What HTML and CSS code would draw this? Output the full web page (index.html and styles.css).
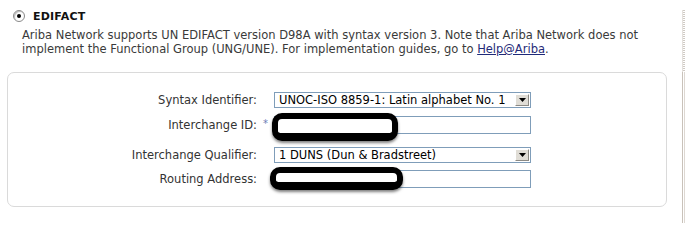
FILE: index.html
```html
<!DOCTYPE html>
<html lang="en">
<head>
    <meta charset="UTF-8">
    <title>EDIFACT Settings</title>
    <link rel="stylesheet" href="styles.css">
</head>
<body>
    <div class="page">
        <div class="option-head">
            <span class="radio"><span class="dot"></span></span>
            <span class="option-title">EDIFACT</span>
        </div>
        <div class="desc">
            Ariba Network supports UN EDIFACT version D98A with syntax version 3. Note that Ariba Network does not<br>
            implement the Functional Group (UNG/UNE). For implementation guides, go to <a href="#" class="link">Help@Ariba</a>.
        </div>
        <div class="box">
            <div class="form-row row-syntax">
                <label class="label">Syntax Identifier:</label>
                <span class="req"></span>
                <div class="select">
                    <span class="select-text">UNOC-ISO 8859-1: Latin alphabet No. 1</span>
                    <span class="drop"><svg width="7" height="4" viewBox="0 0 7 4"><path d="M0 0h7L3.5 4z" fill="#000"/></svg></span>
                </div>
            </div>
            <div class="form-row row-id">
                <label class="label">Interchange ID:</label>
                <span class="req">*</span>
                <div class="field">
                    <input type="text" class="input">
                    <span class="redact redact-id"></span>
                </div>
            </div>
            <div class="form-row row-qual">
                <label class="label">Interchange Qualifier:</label>
                <span class="req"></span>
                <div class="select">
                    <span class="select-text">1 DUNS (Dun &amp; Bradstreet)</span>
                    <span class="drop"><svg width="7" height="4" viewBox="0 0 7 4"><path d="M0 0h7L3.5 4z" fill="#000"/></svg></span>
                </div>
            </div>
            <div class="form-row row-route">
                <label class="label">Routing Address:</label>
                <span class="req"></span>
                <div class="field">
                    <input type="text" class="input">
                    <span class="redact redact-route"></span>
                </div>
            </div>
        </div>
    </div>
    <div class="edge">
        <div class="edge-dots"></div>
        <div class="edge-line"></div>
    </div>
</body>
</html>
```

FILE: styles.css
```css
body {
    margin: 0;
    padding: 0;
    background: #fff;
    font-family: "DejaVu Sans", Verdana, sans-serif;
    font-size: 11.5px;
    color: #3a3a3a;
    display: flex;
    width: 685px;
    height: 229px;
    overflow: hidden;
}
.page {
    flex: 1;
    padding-top: 9px;
}
.option-head {
    display: flex;
    align-items: center;
    height: 14px;
    padding-left: 13px;
}
.radio {
    display: flex;
    justify-content: center;
    align-items: center;
    width: 10px;
    height: 10px;
    border: 1px solid #8a8a8a;
    border-radius: 50%;
    background: #fff;
    box-shadow: inset 1px 1px 1px #bbb;
}
.dot {
    width: 4px;
    height: 4px;
    border-radius: 50%;
    background: #000;
}
.option-title {
    margin-left: 8px;
    font-size: 11px;
    font-weight: bold;
    color: #111;
    letter-spacing: 0.2px;
}
.desc {
    margin: 5px 0 0 22px;
    line-height: 14px;
    white-space: nowrap;
}
.link {
    color: #1f2a78;
    text-decoration: underline;
}
.box {
    margin: 16px 0 0 7px;
    width: 660px;
    height: 135px;
    border: 1px solid #dadada;
    border-radius: 7px;
    padding-top: 19px;
    box-sizing: border-box;
}
.form-row {
    display: grid;
    grid-template-columns: 249px 17px 257px;
    align-items: center;
}
.row-id {
    margin-top: 8px;
}
.row-qual {
    margin-top: 13px;
}
.row-route {
    margin-top: 7px;
}
.label {
    text-align: right;
    color: #333;
    white-space: nowrap;
}
.req {
    color: #6b7cb5;
    font-size: 10px;
    align-self: start;
    padding: 3px 0 0 6px;
    line-height: 10px;
}
.select {
    display: flex;
    align-items: center;
    justify-content: space-between;
    height: 16px;
    border: 1px solid #7f9db9;
    box-sizing: border-box;
    background: #fff;
    color: #000;
    padding: 0 1px 0 4px;
}
.select-text {
    white-space: nowrap;
    line-height: 14px;
}
.drop {
    display: flex;
    justify-content: center;
    align-items: center;
    width: 14px;
    height: 12px;
    background: #e0ddd6;
    border: 1px solid;
    border-color: #fff #8c8a84 #8c8a84 #fff;
    box-sizing: border-box;
}
.field {
    position: relative;
    height: 18px;
}
.input {
    display: block;
    width: 257px;
    height: 18px;
    margin: 0;
    border: 1px solid #7f9db9;
    box-sizing: border-box;
    background: #fff;
    padding: 0;
}
.redact {
    position: absolute;
    background: #fff;
    border: 6px solid #000;
    border-bottom-width: 8px;
    border-radius: 10px;
    box-sizing: border-box;
    box-shadow: 0 2px 3px rgba(0, 0, 0, 0.5);
}
.redact-id {
    left: -2px;
    top: -3px;
    width: 126px;
    height: 28px;
}
.redact-route {
    left: -4px;
    top: -3px;
    width: 133px;
    height: 23px;
}
.edge {
    width: 3px;
    padding-top: 10px;
}
.edge-dots {
    height: 62px;
    background: repeating-linear-gradient(180deg, #cfcac4 0 1px, #fff 1px 2px);
    border-left: 1px solid #e4e0dc;
}
.edge-line {
    height: 151px;
    border-left: 1px solid #c9c2ba;
    border-right: 1px solid #ddd8d2;
}
```
